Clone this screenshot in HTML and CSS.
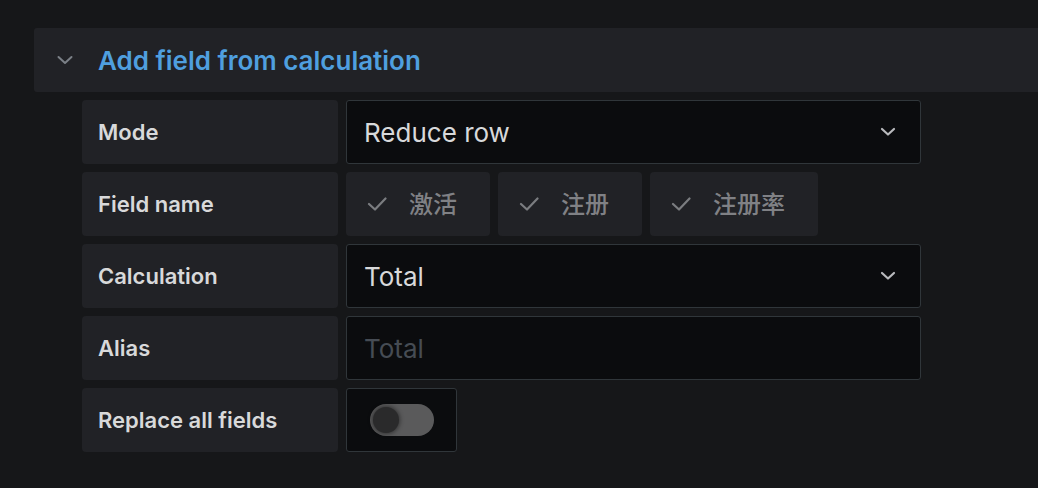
FILE: index.html
```html
<!DOCTYPE html>
<html>

<head>
    <meta charset="utf-8">
    <title>Add field from calculation</title>
    <link rel="stylesheet" href="styles.css">
</head>

<body>
    <div class="editor">
        <div class="section-header">
            <svg class="collapse-icon" width="16" height="16" viewBox="0 0 16 16">
                <path d="M1.5 5l6.5 6 6.5-6" fill="none" stroke="#7b8087" stroke-width="2" stroke-linecap="round" stroke-linejoin="round"/>
            </svg>
            <span class="section-title">Add field from calculation</span>
        </div>

        <div class="rows">
            <div class="row">
                <div class="label">Mode</div>
                <div class="select">
                    <span>Reduce row</span>
                    <svg class="caret" width="16" height="16" viewBox="0 0 16 16">
                        <path d="M2 5l6 5.5 6-5.5" fill="none" stroke="#b9babd" stroke-width="2.2" stroke-linecap="round" stroke-linejoin="round"/>
                    </svg>
                </div>
            </div>

            <div class="row">
                <div class="label">Field name</div>
                <div class="chips">
                    <div class="chip">
                        <svg class="check" width="20" height="20" viewBox="0 0 20 20">
                            <path d="M2 10l6 5.5 10.5-11" fill="none" stroke="#7b7d80" stroke-width="2.2" stroke-linecap="round" stroke-linejoin="round"/>
                        </svg>
                        <span>激活</span>
                    </div>
                    <div class="chip">
                        <svg class="check" width="20" height="20" viewBox="0 0 20 20">
                            <path d="M2 10l6 5.5 10.5-11" fill="none" stroke="#7b7d80" stroke-width="2.2" stroke-linecap="round" stroke-linejoin="round"/>
                        </svg>
                        <span>注册</span>
                    </div>
                    <div class="chip">
                        <svg class="check" width="20" height="20" viewBox="0 0 20 20">
                            <path d="M2 10l6 5.5 10.5-11" fill="none" stroke="#7b7d80" stroke-width="2.2" stroke-linecap="round" stroke-linejoin="round"/>
                        </svg>
                        <span>注册率</span>
                    </div>
                </div>
            </div>

            <div class="row">
                <div class="label">Calculation</div>
                <div class="select">
                    <span>Total</span>
                    <svg class="caret" width="16" height="16" viewBox="0 0 16 16">
                        <path d="M2 5l6 5.5 6-5.5" fill="none" stroke="#b9babd" stroke-width="2.2" stroke-linecap="round" stroke-linejoin="round"/>
                    </svg>
                </div>
            </div>

            <div class="row">
                <div class="label">Alias</div>
                <input class="text-input" type="text" placeholder="Total">
            </div>

            <div class="row">
                <div class="label">Replace all fields</div>
                <div class="switch-box">
                    <div class="switch"><span class="knob"></span></div>
                </div>
            </div>
        </div>
    </div>
</body>

</html>
```

FILE: styles.css
```css
* {
    margin: 0;
    padding: 0;
    box-sizing: border-box;
}

body {
    width: 1038px;
    height: 488px;
    overflow: hidden;
    background-color: #161719;
    font-family: Inter, "Noto Sans CJK SC", sans-serif;
    color: #d8d9da;
}

.editor {
    padding: 28px 0 0 34px;
}

.section-header {
    height: 64px;
    display: flex;
    align-items: center;
    padding-left: 23px;
    background-color: #212226;
    border-radius: 3px 0 0 3px;
}

.collapse-icon {
    margin-right: 25px;
}

.section-title {
    font-size: 26px;
    font-weight: 600;
    color: #4f9fdf;
}

.rows {
    display: flex;
    flex-direction: column;
    gap: 8px;
    padding: 8px 0 0 48px;
}

.row {
    display: flex;
    gap: 8px;
    height: 64px;
}

.label {
    width: 256px;
    display: flex;
    align-items: center;
    padding-left: 16px;
    background-color: #212226;
    border-radius: 4px;
    font-size: 22px;
    font-weight: 600;
    color: #d8d9da;
}

.select,
.text-input,
.switch-box {
    background-color: #0b0c0e;
    border: 1px solid #30363a;
    border-radius: 3px;
}

.select {
    width: 575px;
    display: flex;
    align-items: center;
    justify-content: space-between;
    padding: 0 24px 0 17px;
    font-size: 26px;
}

.text-input {
    width: 575px;
    padding-left: 17px;
    font-family: inherit;
    font-size: 26px;
    color: #d8d9da;
    outline: none;
}

.text-input::placeholder {
    color: #464c54;
}

.chips {
    display: flex;
    gap: 8px;
}

.chip {
    display: flex;
    align-items: center;
    gap: 22px;
    padding: 0 33px 0 21px;
    background-color: #212226;
    border-radius: 4px;
    font-size: 24px;
    font-weight: 500;
    color: #808185;
}

.chip span {
    margin-top: -3px;
}

.switch-box {
    width: 111px;
    display: flex;
    align-items: center;
    padding-left: 23px;
}

.switch {
    width: 64px;
    height: 32px;
    border-radius: 16px;
    background-color: #5a5a5b;
    padding: 3px;
}

.knob {
    display: block;
    width: 26px;
    height: 26px;
    border-radius: 50%;
    background-color: #2a2a2b;
    box-shadow: 0 0 4px 1px rgba(0, 0, 0, .45);
}
```
